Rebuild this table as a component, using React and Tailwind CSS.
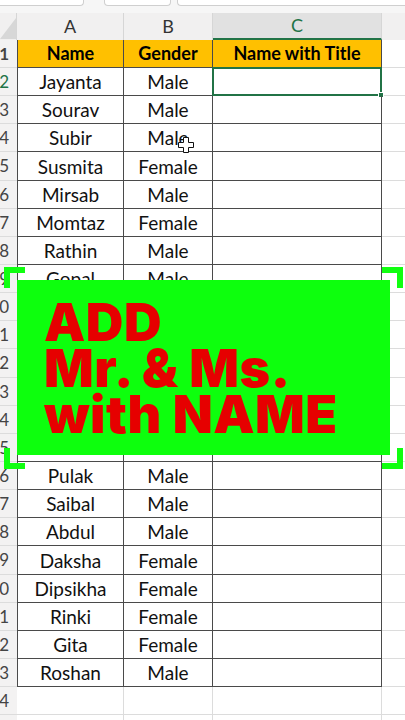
const rows = [
  ['Jayanta', 'Male'],
  ['Sourav', 'Male'],
  ['Subir', 'Male'],
  ['Susmita', 'Female'],
  ['Mirsab', 'Male'],
  ['Momtaz', 'Female'],
  ['Rathin', 'Male'],
  ['Gopal', 'Male'],
  ['Kunal', 'Male'],
  ['Rumi', 'Female'],
  ['Amit', 'Male'],
  ['Nisha', 'Female'],
  ['Tanmoy', 'Male'],
  ['Rohit', 'Male'],
  ['Pulak', 'Male'],
  ['Saibal', 'Male'],
  ['Abdul', 'Male'],
  ['Daksha', 'Female'],
  ['Dipsikha', 'Female'],
  ['Rinki', 'Female'],
  ['Gita', 'Female'],
  ['Roshan', 'Male'],
];

function RowNum({ n, active }) {
  return (
    <div className={`w-[17px] shrink-0 h-full overflow-hidden flex items-center justify-end pr-[8px] bg-[#f3f2f2] border-b border-[#dcdcdc] text-[17px] ${active ? 'text-[#217346]' : 'text-[#444]'}`}>
      <span className="whitespace-nowrap">{n}</span>
    </div>
  );
}

function Corner({ className }) {
  return <div className={`absolute w-[21px] h-[21px] border-[#10ff10] ${className}`} />;
}

export default function App() {
  return (
    <div className="relative w-[405px] h-[720px] overflow-hidden bg-white font-['Lato',sans-serif]">
      {/* formula bar remnants */}
      <div className="h-[13px] bg-[#f6f6f6] flex items-start">
        <div className="w-[84px] h-[6px] bg-white border-b border-r border-[#cfcfcf] rounded-br-[4px]" />
        <div className="ml-[20px] w-[67px] h-[6px] bg-white border border-t-0 border-[#cfcfcf] rounded-b-[4px]" />
        <div className="ml-[6px] flex-1 h-[6px] bg-white border border-t-0 border-r-0 border-[#cfcfcf] rounded-bl-[4px]" />
      </div>

      {/* column letters */}
      <div className="flex h-[27px] bg-[#f1f0f0] text-[18px] text-[#333]">
        <div className="relative w-[17px] shrink-0 border-r border-[#d6d6d6]">
          <svg className="absolute left-0 top-[5px]" width="16" height="21" viewBox="0 0 16 21">
            <polygon points="16,0 16,21 0,21" fill="#d7d7d7" />
          </svg>
        </div>
        <div className="w-[107px] shrink-0 flex items-center justify-center border-r border-[#d6d6d6]">A</div>
        <div className="w-[89px] shrink-0 flex items-center justify-center border-r border-[#d6d6d6]">B</div>
        <div className="w-[169px] shrink-0 flex items-center justify-center bg-[#e1e1e1] border-b-2 border-[#217346] text-[#217346] border-r border-r-[#d6d6d6]">C</div>
        <div className="flex-1" />
      </div>

      {/* header row */}
      <div className="flex h-[28px] text-[18px] font-bold text-black">
        <RowNum n={1} />
        <div className="w-[107px] shrink-0 flex items-center justify-center bg-[#ffc000] border-l border-r border-b border-[#4a4a4a]">Name</div>
        <div className="w-[89px] shrink-0 flex items-center justify-center bg-[#ffc000] border-r border-b border-[#4a4a4a]">Gender</div>
        <div className="w-[169px] shrink-0 flex items-center justify-center bg-[#ffc000] border-r border-b border-[#4a4a4a]">Name with Title</div>
        <div className="flex-1 border-b border-[#dcdcdc]" />
      </div>

      {rows.map(([name, gender], i) => (
        <div key={name} className={`flex text-[19px] text-[#111] ${i % 7 === 3 ? 'h-[29px]' : 'h-[28px]'}`}>
          <RowNum n={i + 2} active={i === 0} />
          <div className="w-[107px] shrink-0 flex items-center justify-center pt-[2px] border-l border-r border-b border-[#4a4a4a]">{name}</div>
          <div className="w-[89px] shrink-0 flex items-center justify-center pt-[2px] border-r border-b border-[#4a4a4a]">{gender}</div>
          <div className="relative w-[169px] shrink-0 border-r border-b border-[#4a4a4a]">
            {i === 0 && (
              <div className="absolute -left-[1px] -top-[1px] -right-[1px] -bottom-[1px] border-2 border-[#217346]">
                <div className="absolute -right-[4px] -bottom-[4px] w-[6px] h-[6px] bg-[#217346] border border-white" />
              </div>
            )}
          </div>
          <div className="flex-1 border-b border-[#dcdcdc]" />
        </div>
      ))}

      {[24, 25].map((n) => (
        <div key={n} className="flex h-[28px]">
          <RowNum n={n} />
          <div className="w-[107px] shrink-0 border-r border-b border-[#dcdcdc]" />
          <div className="w-[89px] shrink-0 border-r border-b border-[#dcdcdc]" />
          <div className="w-[169px] shrink-0 border-r border-b border-[#dcdcdc]" />
          <div className="flex-1 border-b border-[#dcdcdc]" />
        </div>
      ))}

      {/* cursor */}
      <svg className="absolute left-[178px] top-[137px]" width="16" height="16" viewBox="0 0 16 16">
        <path d="M5.5 0.5h5v5h5v5h-5v5h-5v-5h-5v-5h5z" fill="#fff" stroke="#111" strokeWidth="1" />
      </svg>

      {/* title overlay */}
      <Corner className="left-[4px] top-[267px] border-l-[6px] border-t-[6px]" />
      <Corner className="left-[382px] top-[267px] border-r-[6px] border-t-[6px]" />
      <Corner className="left-[4px] top-[448px] border-l-[6px] border-b-[6px]" />
      <Corner className="left-[382px] top-[448px] border-r-[6px] border-b-[6px]" />
      <div className="absolute left-[17px] top-[280px] w-[373px] h-[175px] bg-[#0dff0d] pl-[27px] pt-[20px] font-['Inter',sans-serif] font-black text-[52px] leading-[46px] tracking-[0.5px] text-[#e60000]">
        <div>ADD</div>
        <div>Mr. &amp; Ms.</div>
        <div>with NAME</div>
      </div>
    </div>
  );
}
